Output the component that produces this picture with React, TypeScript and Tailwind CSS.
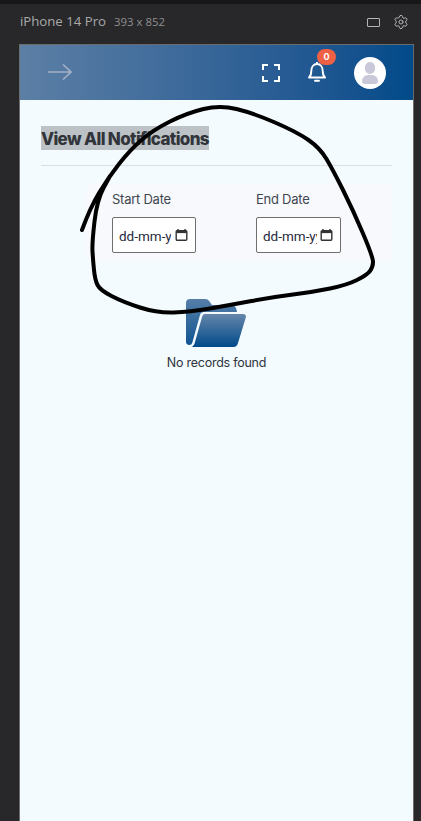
import { Settings } from "lucide-react";

// pen line traced from the screenshot, smoothed through midpoints
const penPoints: [number, number][] = [
  [82, 230], [90, 208], [108, 178], [130, 150], [153, 130], [187, 113], [220, 105], [253, 113], [297, 132],
  [320, 148], [333, 170], [353, 210], [373, 257], [373, 267], [367, 275], [347, 285], [313, 292], [273, 297],
  [230, 305], [190, 312], [157, 313], [123, 302], [100, 290], [95, 280], [93, 260], [92, 243], [97, 200], [110, 176],
];

function penPath() {
  let d = `M${penPoints[0][0]} ${penPoints[0][1]}`;
  for (let i = 1; i < penPoints.length - 1; i++) {
    const [x, y] = penPoints[i];
    const [nx, ny] = penPoints[i + 1];
    d += ` Q${x} ${y} ${(x + nx) / 2} ${(y + ny) / 2}`;
  }
  const last = penPoints[penPoints.length - 1];
  return `${d} L${last[0]} ${last[1]}`;
}

function CalendarGlyph() {
  return (
    <svg width="13" height="14" viewBox="0 0 13 14" className="shrink-0">
      <path d="M3 1v2M10 1v2" stroke="#333" strokeWidth="1.4" />
      <rect x="1.2" y="2.7" width="10.6" height="9.6" rx="1" fill="none" stroke="#333" strokeWidth="1.4" />
      <rect x="1.2" y="2.7" width="10.6" height="2.4" fill="#333" />
    </svg>
  );
}

function DateField({ label, box, clip }: { label: string; box: string; clip: string }) {
  return (
    <div className={`${box} flex flex-col`}>
      <span className="text-[13px] leading-[18px] text-[#3f4650] font-['Inter',sans-serif] tracking-[-0.25px] mb-[9px] whitespace-nowrap">
        {label}
      </span>
      <div className="h-9 border border-[#6f6f6f] rounded-[2px] bg-white flex items-center pl-[6px]">
        <span className={`${clip} pt-[2px] overflow-hidden whitespace-nowrap text-[13.5px] text-[#1f2a3a] font-['Roboto',sans-serif]`}>
          dd-mm-yyyy
        </span>
        <CalendarGlyph />
      </div>
    </div>
  );
}

export default function App() {
  return (
    <div className="relative h-[821px] w-[421px] overflow-hidden bg-[#28282a] font-['Inter',sans-serif]">
      <div className="h-1 bg-[#171717]" />
      <div className="h-10 pb-[4px] flex items-center pl-5 pr-[12px] font-['Open_Sans',sans-serif]">
        <span className="text-[13.2px] font-medium text-[#a9a9a9]">iPhone 14 Pro</span>
        <span className="ml-2 text-[11.4px] text-[#8f8f8f]">393 x 852</span>
        <div className="ml-auto flex items-center gap-[13px]">
          <div className="h-[9px] w-[13px] border border-[#b5b5b5] rounded-[1px]" />
          <Settings size={16} strokeWidth={1.5} className="text-[#b5b5b5]" />
        </div>
      </div>

      <div className="ml-[19px] w-[395px] h-[777px] border-x border-t border-[#6b6b6b] bg-[#f4fbff] flex flex-col">
        <header className="relative h-[55px] shrink-0 bg-gradient-to-r from-[#5c7fa5] to-[#004a8a] flex items-center pl-7 pr-[27px]">
          <svg width="24" height="18" viewBox="0 0 24 18" fill="none" stroke="#a5b0c6" strokeWidth="1.6" className="-mt-[2px]">
            <path d="M0 9h23M15 1.500 23 9l-8 7.500" />
          </svg>
          <svg width="18" height="18" viewBox="0 0 18 18" fill="none" stroke="#fff" strokeWidth="2" className="ml-[190px]">
            <path d="M1 6V1h5M12 1h5v5M17 12v5h-5M6 17H1v-5" />
          </svg>
          <div className="relative ml-[28px] w-[18px] h-[22px]">
            <svg width="18" height="21" viewBox="0 0 18 21" fill="none" stroke="#fff" strokeWidth="1.9">
              <path d="M1 15.500c1.600-1.400 2.300-3 2.300-6.500C3.300 5 5.500 2 9 2s5.700 3 5.700 7c0 3.500.7 5.100 2.300 6.500z" strokeLinejoin="round" />
              <path d="M7 18.800h4M9 .5v1.500" strokeLinecap="round" />
            </svg>
            <span className="absolute -top-[13px] left-[9px] h-4 w-[19px] rounded-full bg-[#ee6144] text-white text-[9px] font-bold flex items-center justify-center">
              0
            </span>
          </div>
          <div className="ml-auto h-8 w-8 rounded-full bg-white flex flex-col items-center justify-center">
            <span className="h-[12px] w-[10px] rounded-full bg-[#c9c8d8]" />
            <span className="mt-[1px] h-[9px] w-4 rounded-t-[6px] rounded-b-[3px] bg-[#c9c8d8]" />
          </div>
        </header>

        <main className="px-[21px] flex flex-col">
          <div className="pt-[26px] pb-[15px] border-b border-[#d8e0e4]">
            <h1 className="w-fit h-6 bg-[#bcc2c5] text-[17px] leading-[26px] font-extrabold tracking-[-0.65px] text-[#31343a] whitespace-nowrap">
              View All Notifications
            </h1>
          </div>
          <div className="mt-[17px] ml-[45px] h-[79px] rounded-l-[10px] rounded-r-[6px] bg-[#f8f9fc] pt-[7px] pl-[26px] flex gap-[60px]">
            <DateField label="Start Date" box="w-[84px]" clip="w-[52px] mr-[4px]" />
            <DateField label="End Date" box="w-[85px]" clip="w-[54px] mr-[3px]" />
          </div>
          <div className="mt-[37px] flex flex-col items-center">
            <svg width="60" height="48" viewBox="0 0 60 48" className="ml-[-2px]">
              <defs>
                <linearGradient id="folderBack" x1="0" y1="0" x2="0" y2="1">
                  <stop offset="0" stopColor="#567ea8" />
                  <stop offset="1" stopColor="#0f5592" />
                </linearGradient>
                <linearGradient id="folderFront" x1="0" y1="0" x2="0" y2="1">
                  <stop offset="0" stopColor="#6586aa" />
                  <stop offset="1" stopColor="#004a8a" />
                </linearGradient>
              </defs>
              <path
                d="M0 4a4 4 0 0 1 4-4h15c2.500 0 3.500 1 4.500 2.500L26 6h20c3 0 4.500 3 5 7H18c-2 0-3.500 1-4 3L6.500 43c-.6 2-1.500 3-3 3C1 46 0 44.500 0 43z"
                fill="url(#folderBack)"
              />
              <path
                d="M19 15h38c2.500 0 3.300 1.500 2.800 3.500L52 44c-.8 2.500-2 4-4.500 4H5.500c2-1 3-2.500 3.500-5l7-25c.5-2 1.500-3 3-3z"
                fill="url(#folderFront)"
              />
            </svg>
            <p className="mt-[7px] text-[12.5px] leading-[18px] text-[#2d3440] tracking-[-0.25px]">No records found</p>
          </div>
        </main>
      </div>

      {/* pen scribble on top of the screenshot */}
      <svg className="absolute inset-0 pointer-events-none" width="421" height="821" fill="none" stroke="#000" strokeWidth="4" strokeLinecap="round" strokeLinejoin="round">
        <path d={penPath()} />
      </svg>
    </div>
  );
}
